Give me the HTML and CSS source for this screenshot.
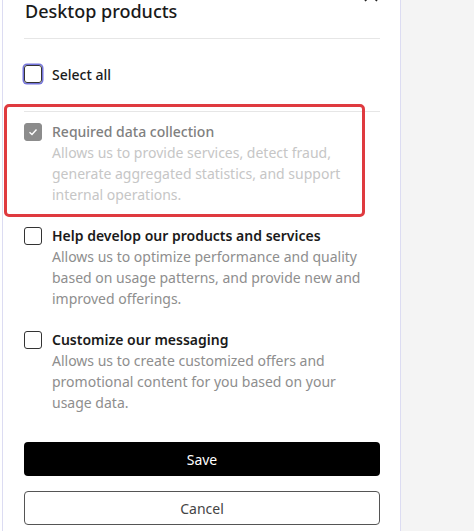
FILE: index.html
```html
<!DOCTYPE html>
<html lang="en">
<head>
<meta charset="utf-8">
<title>Desktop products</title>
<link rel="stylesheet" href="styles.css">
</head>
<body>
<div class="page">
  <div class="edge"></div>
  <section class="panel">
    <svg class="close" width="16" height="16" viewBox="0 0 16 16" aria-hidden="true"><path d="M2 2 L14 14 M14 2 L2 14" stroke="#222" stroke-width="1.6" fill="none"/></svg>
    <header class="head"><h1 class="title">Desktop products</h1></header>
    <div class="select-all">
      <span class="box box-focus"></span>
      <span class="label">Select all</span>
    </div>
    <div class="items">
      <div class="item item-disabled">
        <span class="box box-checked"><svg width="10" height="8" viewBox="0 0 10 8"><path d="M1.5 4.2 L4 6.5 L8.5 1.5" stroke="#fff" stroke-width="1.4" fill="none"/></svg></span>
        <div class="text">
          <div class="label">Required data collection</div>
          <div class="desc">Allows us to provide services, detect fraud, generate aggregated statistics, and support internal operations.</div>
        </div>
      </div>
      <div class="item">
        <span class="box"></span>
        <div class="text">
          <div class="label">Help develop our products and services</div>
          <div class="desc">Allows us to optimize performance and quality based on usage patterns, and provide new and improved offerings.</div>
        </div>
      </div>
      <div class="item">
        <span class="box"></span>
        <div class="text">
          <div class="label">Customize our messaging</div>
          <div class="desc">Allows us to create customized offers and promotional content for you based on your usage data.</div>
        </div>
      </div>
    </div>
    <div class="actions">
      <button class="btn btn-primary">Save</button>
      <button class="btn btn-secondary">Cancel</button>
    </div>
    <div class="highlight"></div>
  </section>
  <aside class="side"></aside>
</div>
</body>
</html>
```
FILE: styles.css
```css
html, body {
  margin: 0;
  padding: 0;
  background: #fff;
  font-family: "Noto Sans", "Open Sans", sans-serif;
  color: #1a1a1a;
}
.page {
  display: flex;
  height: 531px;
  overflow: hidden;
}
.edge {
  width: 2px;
  background: #fff;
}
.panel {
  position: relative;
  border-left: 1px solid #dcdcf2;
  border-right: 1px solid #dcdcf2;
  background: #fff;
  padding: 0 20px 0 21px;
  box-sizing: border-box;
  width: 399px;
}
.side {
  flex: 1;
  background: #f4f4f4;
}
.close {
  position: absolute;
  left: 360px;
  top: -13px;
}
.head {
  height: 38px;
  border-bottom: 1px solid #e6e6e6;
}
.title {
  margin: 0;
  font-size: 18px;
  line-height: 22px;
  font-weight: 500;
  padding-left: 1px;
}
.select-all {
  display: flex;
  align-items: center;
  gap: 10px;
  height: 20px;
  margin-top: 25px;
  padding-bottom: 27px;
  border-bottom: 1px solid #e6e6e6;
}
.select-all .label {
  font-size: 14px;
  font-weight: 500;
}
.box {
  width: 18px;
  height: 18px;
  box-sizing: border-box;
  border: 1.6px solid #333;
  border-radius: 3px;
  flex: none;
  display: flex;
  align-items: center;
  justify-content: center;
}
.box-focus {
  box-shadow: 0 0 0 1.5px #7474dc;
}
.box-checked {
  background: #8c8c8c;
  border-color: #8c8c8c;
}
.items {
  padding-top: 9px;
  display: flex;
  flex-direction: column;
  gap: 20px;
}
.item {
  display: flex;
  gap: 10px;
  padding-right: 1px;
}
.item .box {
  margin-top: 2px;
}
.item .label {
  font-size: 14px;
  line-height: 21px;
  font-weight: 600;
}
.desc {
  font-size: 14px;
  line-height: 21px;
  color: #8e8e8e;
}
.item-disabled .label {
  color: #808080;
  font-weight: 500;
}
.item-disabled .desc {
  color: #c6c6c6;
}
.actions {
  display: flex;
  flex-direction: column;
  gap: 15px;
  margin-top: 29px;
}
.btn {
  height: 34px;
  border-radius: 4px;
  font-family: inherit;
  font-size: 14px;
  cursor: pointer;
}
.btn-primary {
  background: #000;
  color: #fff;
  border: none;
}
.btn-secondary {
  background: #fff;
  color: #444;
  border: 1px solid #555;
}
.highlight {
  position: absolute;
  left: 1px;
  top: 104px;
  width: 361px;
  height: 113px;
  box-sizing: border-box;
  border: 3px solid #df3a3f;
  border-radius: 5px;
}
```
